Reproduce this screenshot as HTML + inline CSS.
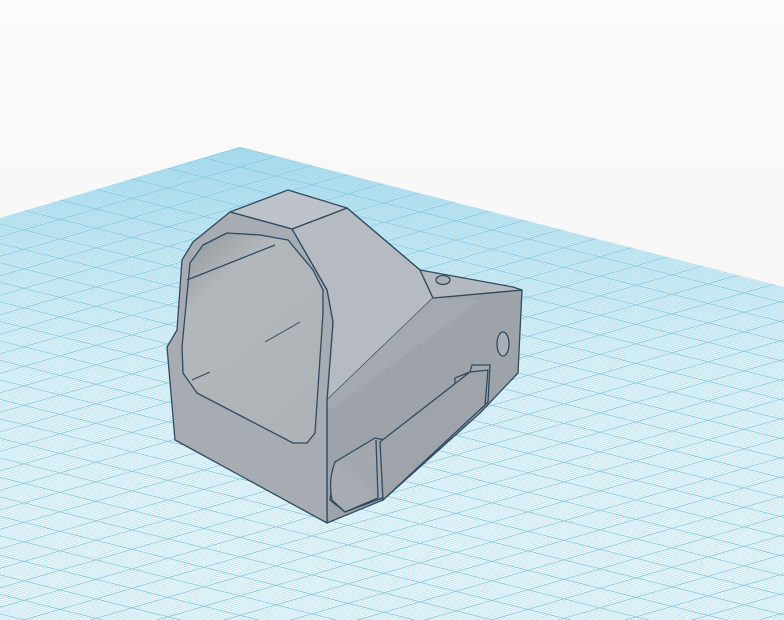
<!DOCTYPE html>
<html><head><style>html,body{margin:0;padding:0;background:#f6f6f6;width:784px;height:620px;overflow:hidden}svg{display:block}</style></head>
<body>
<svg width="784" height="620" viewBox="0 0 784 620" xmlns="http://www.w3.org/2000/svg">
<defs>
<linearGradient id="bg" x1="0" y1="0" x2="0" y2="1"><stop offset="0" stop-color="#fbfbfb"/><stop offset="1" stop-color="#f2f2f2"/></linearGradient>
<pattern id="gp" x="0" y="0" width="1" height="1" patternUnits="userSpaceOnUse">
<rect width="1" height="1" fill="#eef8fb"/>
<path d="M0.1 0V1M0.2 0V1M0.3 0V1M0.4 0V1M0.5 0V1M0.6 0V1M0.7 0V1M0.8 0V1M0.9 0V1M0 0.1H1M0 0.2H1M0 0.3H1M0 0.4H1M0 0.5H1M0 0.6H1M0 0.7H1M0 0.8H1M0 0.9H1" stroke="#a6dbec" stroke-width="0.016" fill="none"/>
<path d="M0.015 0V1M0 0.015H1" stroke="#5fb3d4" stroke-width="0.03" fill="none"/>
</pattern>
<clipPath id="pc"><polygon points="240,147 784,287 784,620 0,620 0,218"/></clipPath>
<linearGradient id="fade" x1="0" y1="0" x2="0" y2="1"><stop offset="0" stop-color="#7cc8e3" stop-opacity="0.6"/><stop offset="0.45" stop-color="#9fd7ea" stop-opacity="0.15"/><stop offset="1" stop-color="#fff" stop-opacity="0"/></linearGradient>
<linearGradient id="win" x1="0" y1="0" x2="0.6" y2="1"><stop offset="0" stop-color="#8e9499"/><stop offset="0.3" stop-color="#b2b7bb"/><stop offset="1" stop-color="#aeb3b7"/></linearGradient>
</defs>
<rect width="784" height="620" fill="url(#bg)"/>
<g clip-path="url(#pc)">
<g transform="matrix(36,9,-36,10.5,240,147)"><rect x="-40" y="-5" width="100" height="120" fill="url(#gp)"/></g>
<rect x="0" y="140" width="784" height="480" fill="url(#fade)"/>
</g>
<g stroke="#2f4a62" stroke-width="1.3" stroke-linejoin="round">
<polygon points="347,208 420,270 433,298 522,290 518,373 480,413 383,500 327,523 327,290 292,229" fill="#9da3a8"/>
<polygon points="292,229 347,208 420,270 433,298 327,400 333,322 327,290" fill="#b5bbc0"/>
<polygon points="327,400 433,298 480,300 330,410" fill="#a3a9ae" stroke="none"/>
<polygon points="420,270 513,287 522,290 433,298" fill="#b3b9be"/>
<ellipse cx="443" cy="280" rx="7" ry="4.5" fill="#a9afb4"/>
<ellipse cx="503" cy="344" rx="6" ry="12" fill="#a9afb4"/>
<polygon points="230,212 288,190 347,208 292,229" fill="#bdc3c8"/>
<polygon points="230,212 292,229 327,290 333,322 327,400 327,523 175,440 167,347 177,330 182,260 193,242" fill="#a6acb1"/>
<polygon points="190,263 203,245 227,233 260,235 288,240 313,270 323,290 323,313 315,433 307,443 293,443 197,393 183,373 182,347" fill="url(#win)"/>
<path d="M187 280 L275 245" fill="none"/>
<path d="M192 380 L210 372 M265 342 L300 322" fill="none" stroke-width="1"/>
<polygon points="330,500 335,462 375,438 385,440 455,392 455,378 470,372 472,365 490,365 488,402 385,497 345,512" fill="#a2a8ad"/>
<polygon points="380,442 383,500 485,405 488,370 470,372" fill="#9ea4a9"/>
<path d="M376 440 L378 498" fill="none"/>
<path d="M335,462 Q328,480 332,500 L345,512 L378,498" fill="#a6acb1"/>
</g>
</svg>
</body></html>
